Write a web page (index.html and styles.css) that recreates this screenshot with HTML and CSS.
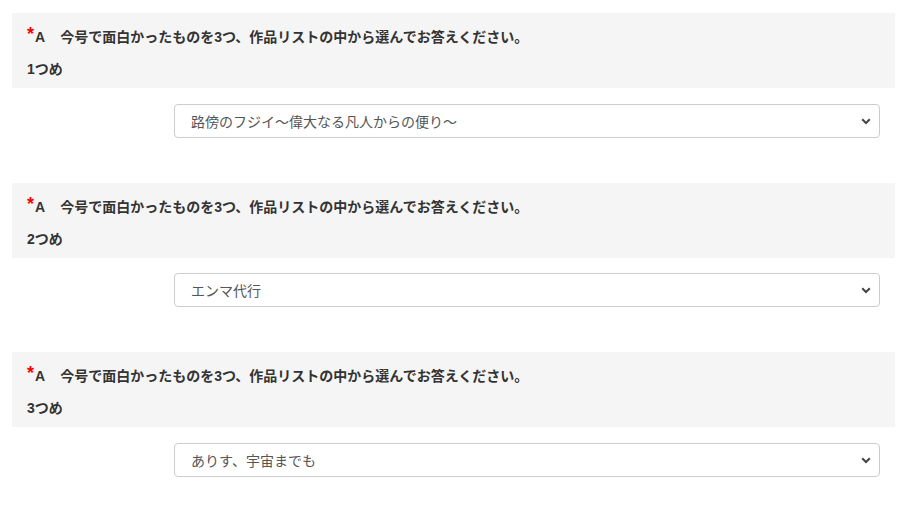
FILE: index.html
```html
<!DOCTYPE html>
<html lang="ja">
<head>
    <meta charset="UTF-8">
    <meta name="viewport" content="width=device-width, initial-scale=1.0">
    <title>アンケート</title>
    <link rel="stylesheet" href="styles.css">
</head>
<body>
    <div class="survey">
        <div class="question">
            <div class="question-head">
                <p class="question-title"><span class="required">*</span><span class="label">A</span><span class="text">今号で面白かったものを3つ、作品リストの中から選んでお答えください。</span></p>
                <p class="question-sub">1つめ</p>
            </div>
            <div class="answer">
                <div class="select-wrap">
                    <select class="select">
                        <option>路傍のフジイ～偉大なる凡人からの便り～</option>
                    </select>
                    <svg class="chevron" width="10" height="7" viewBox="0 0 10 7"><path d="M1.2 1.3 L5 5 L8.8 1.3" fill="none" stroke="#444" stroke-width="2"/></svg>
                </div>
            </div>
        </div>

        <div class="question">
            <div class="question-head">
                <p class="question-title"><span class="required">*</span><span class="label">A</span><span class="text">今号で面白かったものを3つ、作品リストの中から選んでお答えください。</span></p>
                <p class="question-sub">2つめ</p>
            </div>
            <div class="answer">
                <div class="select-wrap">
                    <select class="select">
                        <option>エンマ代行</option>
                    </select>
                    <svg class="chevron" width="10" height="7" viewBox="0 0 10 7"><path d="M1.2 1.3 L5 5 L8.8 1.3" fill="none" stroke="#444" stroke-width="2"/></svg>
                </div>
            </div>
        </div>

        <div class="question">
            <div class="question-head">
                <p class="question-title"><span class="required">*</span><span class="label">A</span><span class="text">今号で面白かったものを3つ、作品リストの中から選んでお答えください。</span></p>
                <p class="question-sub">3つめ</p>
            </div>
            <div class="answer">
                <div class="select-wrap">
                    <select class="select">
                        <option>ありす、宇宙までも</option>
                    </select>
                    <svg class="chevron" width="10" height="7" viewBox="0 0 10 7"><path d="M1.2 1.3 L5 5 L8.8 1.3" fill="none" stroke="#444" stroke-width="2"/></svg>
                </div>
            </div>
        </div>
    </div>
</body>
</html>
```

FILE: styles.css
```css
body {
    font-family: "Liberation Sans", Arial, "Noto Sans CJK JP", sans-serif;
    background-color: #ffffff;
    color: #333;
    margin: 0;
    padding: 0;
}

.survey {
    padding: 13px 20px 0 12px;
}

.question {
    margin-bottom: 45px;
}

.question-head {
    background-color: #f5f5f5;
    padding: 14px 15px 9px 15px;
    height: 75px;
    box-sizing: border-box;
}

.question-title,
.question-sub {
    margin: 0;
    font-size: 14px;
    font-weight: bold;
    line-height: 20px;
    color: #333;
}

.question-sub {
    margin-top: 12px;
}

.required {
    color: #ff0000;
    font-size: 18px;
    vertical-align: top;
    line-height: 14px;
}

.label {
    margin-left: 1px;
}

.text {
    margin-left: 15px;
}

.answer {
    margin-top: 15.5px;
    padding-left: 162px;
}

.select-wrap {
    position: relative;
    width: 706px;
}

.select {
    display: block;
    width: 100%;
    height: 34px;
    padding: 0 30px 0 16px;
    border: 1px solid #ccc;
    border-radius: 4px;
    background-color: #fff;
    color: #555;
    font-family: "Noto Sans CJK JP", sans-serif;
    font-size: 14px;
    appearance: none;
    -webkit-appearance: none;
    box-sizing: border-box;
}

.chevron {
    position: absolute;
    right: 9px;
    top: 14px;
    pointer-events: none;
}
```
